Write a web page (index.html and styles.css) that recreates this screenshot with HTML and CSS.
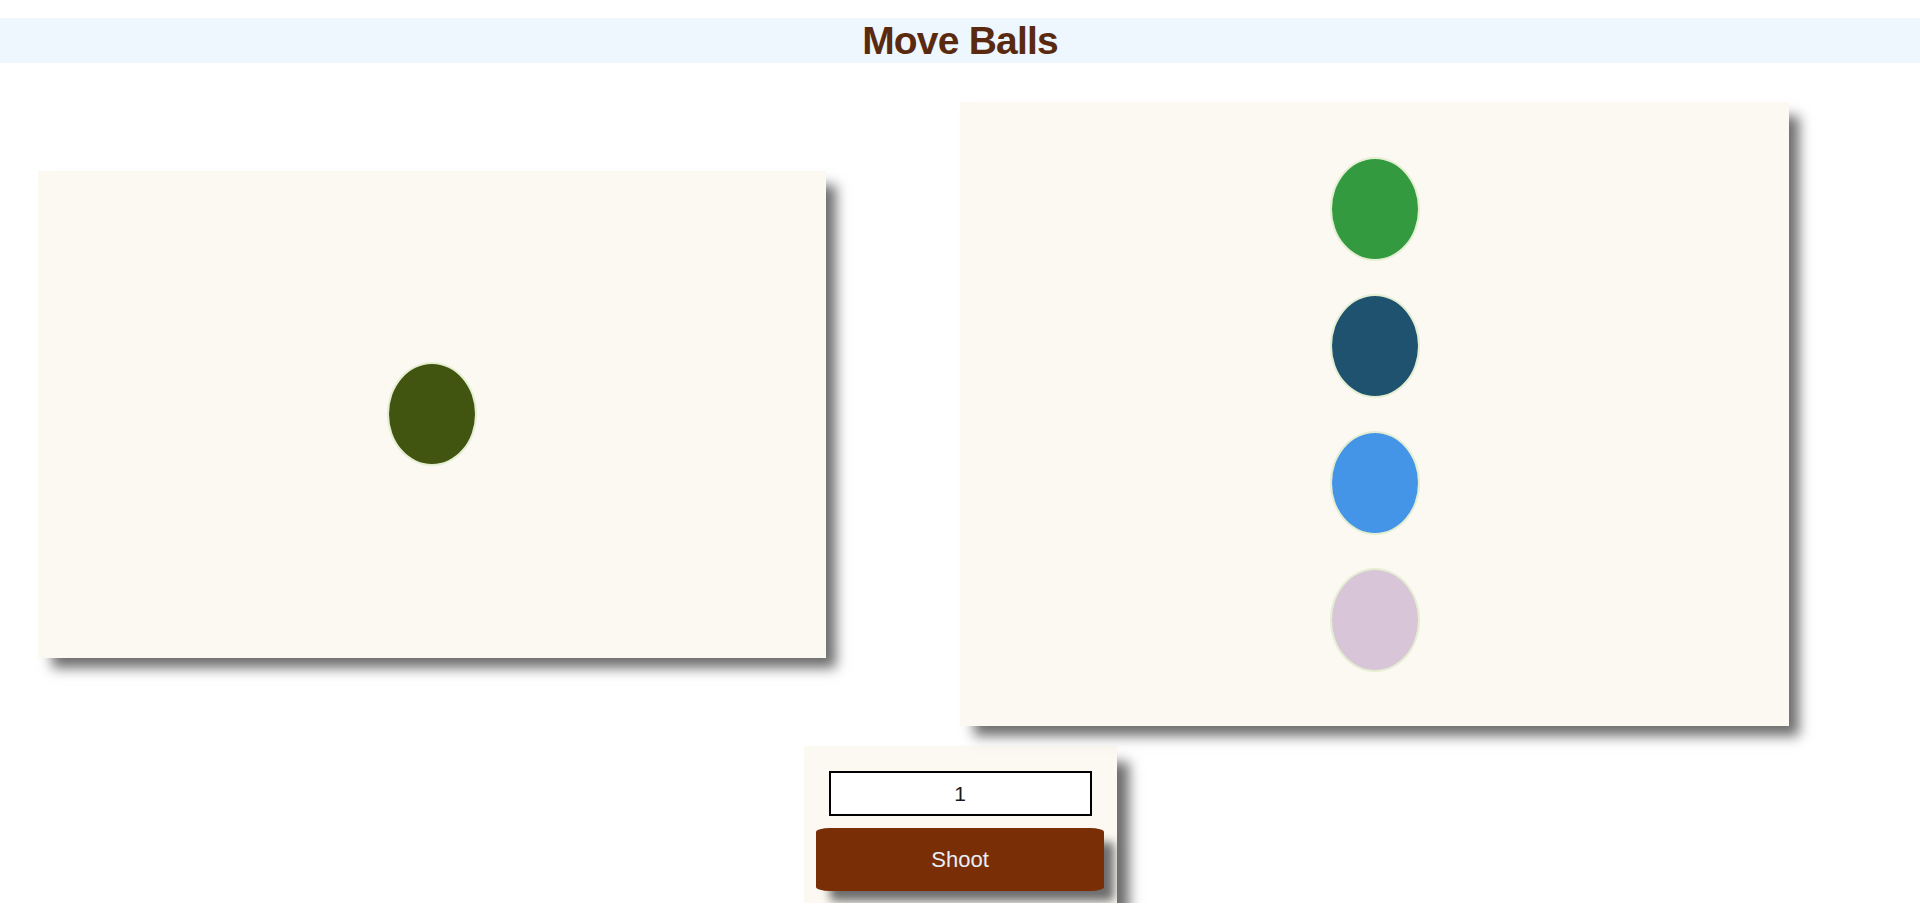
FILE: index.html
```html
<!DOCTYPE html>
<html>
<head>
<meta charset="utf-8">
<title>Move Balls</title>
<link rel="stylesheet" href="styles.css">
</head>
<body>
  <h1 class="title">Move Balls</h1>
  <div class="stage">
    <div class="field field-left">
      <div class="ball ball-olive"></div>
    </div>
    <div class="field field-right">
      <div class="ball ball-green"></div>
      <div class="ball ball-navy"></div>
      <div class="ball ball-blue"></div>
      <div class="ball ball-lilac"></div>
    </div>
  </div>
  <div class="controls">
    <input class="count" type="text" value="1">
    <button class="shoot" type="button">Shoot</button>
  </div>
</body>
</html>
```
FILE: styles.css
```css
html, body {
  margin: 0;
  padding: 0;
  background: #ffffff;
}
body {
  font-family: "Liberation Sans", Arial, sans-serif;
}
.title {
  margin: 18px 0 0;
  height: 45px;
  line-height: 45px;
  background: #eef6fe;
  color: #5a2a10;
  text-align: center;
  font-size: 39px;
  font-weight: bold;
  letter-spacing: -0.8px;
}
.stage {
  display: flex;
  align-items: center;
  margin-top: 39px;
  padding-left: 38px;
  gap: 134px;
}
.field {
  background: #fcf8f2;
  box-shadow: 12px 12px 12px -2px #6e6e6e;
  display: flex;
  align-items: center;
  justify-content: center;
}
.field-left {
  width: 788px;
  height: 487px;
}
.field-right {
  width: 829px;
  height: 624px;
  flex-direction: column;
  gap: 33px;
}
.ball {
  box-sizing: border-box;
  width: 90px;
  height: 104px;
  border-radius: 50%;
  border: 2px solid #e4eed2;
}
.ball-olive { background: #425510; }
.ball-green { background: #339a3f; }
.ball-navy { background: #1f526e; }
.ball-blue { background: #4495e8; }
.ball-lilac { background: #d9c5d8; }
.controls {
  box-sizing: border-box;
  width: 313px;
  height: 157px;
  margin: 20px auto 0;
  padding: 25px 0 12px;
  background: #fcf8f2;
  box-shadow: 14px 14px 12px -2px #6e6e6e;
  display: flex;
  flex-direction: column;
  align-items: center;
  gap: 12px;
}
.count {
  box-sizing: border-box;
  width: 263px;
  height: 45px;
  border: 2px solid #000000;
  background: #ffffff;
  text-align: center;
  font-family: "Liberation Sans", Arial, sans-serif;
  font-size: 21px;
  color: #1a1a1a;
  padding: 0;
  outline: none;
}
.shoot {
  width: 288px;
  height: 63px;
  border: none;
  border-radius: 14px / 4px;
  background: #7a2e06;
  color: #e6eef8;
  font-family: "Liberation Sans", Arial, sans-serif;
  font-size: 22px;
  box-shadow: 12px 12px 10px -2px #6e6e6e;
  cursor: pointer;
}
```
